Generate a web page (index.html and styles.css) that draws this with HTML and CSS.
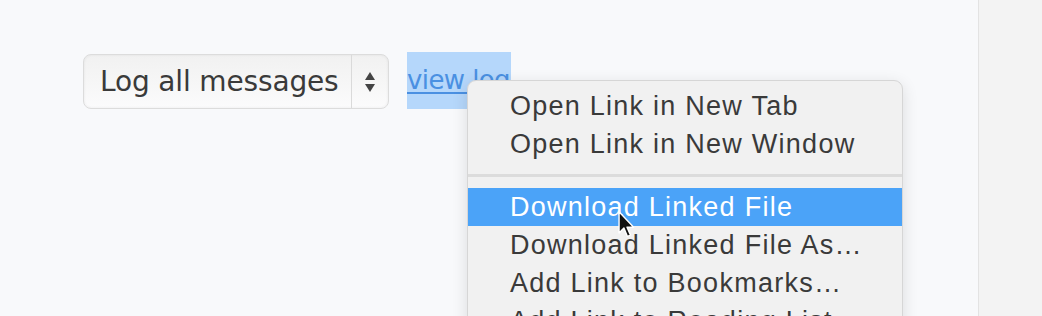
FILE: index.html
```html
<!DOCTYPE html>
<html>
<head>
<meta charset="utf-8">
<link rel="stylesheet" href="styles.css">
</head>
<body>
<div class="page">
  <main class="content">
    <div class="row">
      <div class="select">
        <span class="select-label">Log all messages</span>
        <span class="select-arrows">
          <svg width="12" height="24" viewBox="0 0 12 24"><path d="M6 2 L11 10 L1 10 Z M6 22 L11 14 L1 14 Z" fill="#444"/></svg>
        </span>
      </div>
      <a class="link" href="#">view log</a>
    </div>
  </main>
  <aside class="sidebar"></aside>
  <div class="menu">
    <div class="item">Open Link in New Tab</div>
    <div class="item">Open Link in New Window</div>
    <div class="sep"></div>
    <div class="item active">Download Linked File</div>
    <div class="item">Download Linked File As…</div>
    <div class="item">Add Link to Bookmarks…</div>
    <div class="item">Add Link to Reading List</div>
  </div>
  <svg class="cursor" width="20" height="30" viewBox="0 0 22 34"><path d="M2 2 L2 26 L7.5 20.5 L11.5 30 L15 28.5 L11 19.5 L18.5 19.5 Z" fill="#111" stroke="#fff" stroke-width="1.6" stroke-linejoin="round"/></svg>
</div>
</body>
</html>
```
FILE: styles.css
```css
html, body {
  margin: 0;
  padding: 0;
  height: 100%;
  overflow: hidden;
}
body {
  background: #f8f9fb;
  font-family: "Liberation Sans", Arial, sans-serif;
}
.page {
  position: relative;
  display: flex;
  height: 316px;
  overflow: hidden;
}
.content {
  flex: 1;
  padding: 52px 0 0 83px;
}
.sidebar {
  width: 63px;
  background: #f3f3f3;
  border-left: 1px solid #e3e3e3;
}
.row {
  display: flex;
  align-items: flex-start;
  gap: 18px;
}
.select {
  margin-top: 2px;
  width: 304px;
  height: 53px;
  border: 1px solid #dcdcdc;
  border-radius: 8px;
  background: linear-gradient(#f1f1f1, #f6f6f6 50%, #fbfbfc);
  box-shadow: inset 0 0 3px rgba(0,0,0,0.07);
  display: flex;
  align-items: center;
  box-sizing: content-box;
}
.select-label {
  flex: 1;
  padding-left: 16px;
  font-family: "DejaVu Sans", Verdana, sans-serif;
  font-size: 28px;
  color: #3a3a3a;
  letter-spacing: -0.15px;
}
.select-arrows {
  width: 36px;
  height: 53px;
  border-left: 1px solid #dadada;
  display: flex;
  align-items: center;
  justify-content: center;
}
.link {
  display: block;
  height: 57px;
  line-height: 57px;
  padding: 0 1px 0 0;
  background: #b5d7fb;
  color: #4a90e2;
  font-family: "DejaVu Sans", Verdana, sans-serif;
  font-size: 26px;
  letter-spacing: -0.6px;
  text-decoration: underline;
  text-underline-offset: 3px;
}
.menu {
  position: absolute;
  left: 467px;
  top: 80px;
  width: 436px;
  height: 250px;
  background: #f1f1f1;
  border: 1px solid #d6d6d6;
  border-radius: 9px;
  box-shadow: 0 4px 16px rgba(0,0,0,0.12);
  padding-top: 6px;
  box-sizing: border-box;
}
.item {
  height: 38px;
  line-height: 38px;
  padding-left: 42px;
  font-size: 27px;
  letter-spacing: 1.25px;
  color: #3a3a3a;
  white-space: nowrap;
}
.item.active {
  background: #4ba3f8;
  color: #fff;
}
.sep {
  height: 3px;
  background: #dcdcdc;
  margin: 11px 0 11px;
}
.cursor {
  position: absolute;
  left: 617px;
  top: 210px;
}
```
